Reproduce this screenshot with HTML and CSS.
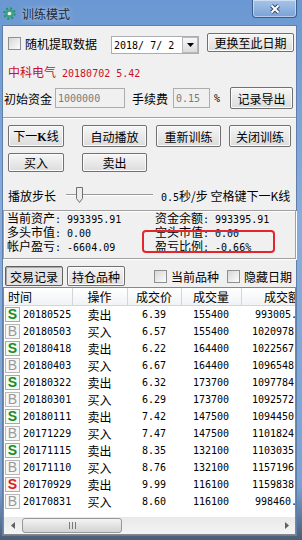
FILE: index.html
```html
<!DOCTYPE html>
<html>
  <head>
    <meta charset="utf-8">
    <title>训练模式</title>
    <link rel="stylesheet" href="styles.css">
  </head>

  <body>
    <div class="window">
      <!-- title bar -->
      <div class="titlebar">
        <svg class="app-icon" width="13" height="13" viewBox="0 0 16 16">
          <circle cx="8" cy="8" r="6.2" fill="none" stroke="#2b8f6c" stroke-width="3" stroke-dasharray="2.43 2.43" />
          <circle cx="8" cy="8" r="5" fill="#36a47d" />
          <circle cx="8" cy="8" r="2.3" fill="#e4f3ec" />
        </svg>
        <span class="title">训练模式</span>
        <div class="close-btn">
          <svg width="14" height="12" viewBox="0 0 14 12">
            <path d="M3.5 2.5 L10.5 9.5 M10.5 2.5 L3.5 9.5" stroke="#34496a" stroke-width="4" />
            <path d="M3.5 2.5 L10.5 9.5 M10.5 2.5 L3.5 9.5" stroke="#fff" stroke-width="2" />
          </svg>
        </div>
      </div>

      <div class="client">
        <div class="row date-row">
          <label class="check"><span class="box"></span>随机提取数据</label>
          <div class="combo">
            <span class="num">2018/ 7/ 2</span>
            <span class="drop">
              <svg width="7" height="4" viewBox="0 0 7 4"><path d="M0 0 H7 L3.5 4 Z" fill="#000" /></svg>
            </span>
          </div>
          <button class="btn change-btn">更换至此日期</button>
        </div>

        <div class="stock">中科电气<span class="num"> 20180702 5.42</span></div>

        <div class="row fund-row">
          <span>初始资金</span>
          <input class="field fund-field" type="text" value="1000000" disabled />
          <span class="fee-label">手续费</span>
          <input class="field fee-field" type="text" value="0.15" disabled />
          <span class="pct num">%</span>
          <button class="btn export-btn">记录导出</button>
        </div>

        <div class="sep"></div>

        <!-- playback controls -->
        <div class="controls">
          <button class="btn btn-next">下一<b class="k">K</b>线</button>
          <button class="btn btn-auto">自动播放</button>
          <button class="btn btn-reset">重新训练</button>
          <button class="btn btn-close">关闭训练</button>
          <button class="btn btn-buy">买入</button>
          <button class="btn btn-sell">卖出</button>
        </div>

        <div class="row speed">
          <span>播放步长</span>
          <div class="slider">
            <svg class="thumb" width="7" height="16" viewBox="0 0 7 16">
              <path d="M0.5 0.5 H6.5 V11.5 L3.5 15.5 L0.5 11.5 Z" fill="#ececec" stroke="#6f6f6f" />
            </svg>
          </div>
          <span class="speed-text"><span class="num">0.5</span>秒/步 空格键下一K线</span>
        </div>

        <!-- account summary -->
        <div class="stats">
          <div>当前资产<span class="num">: 993395.91</span></div>
          <div>资金余额<span class="num">: 993395.91</span></div>
          <div>多头市值<span class="num">: 0.00</span></div>
          <div>空头市值<span class="num">: 0.00</span></div>
          <div>帐户盈亏<span class="num">: -6604.09</span></div>
          <div>盈亏比例<span class="num">: -0.66%</span></div>
          <div class="mark"></div>
        </div>

        <div class="row tabs">
          <button class="btn tab active">交易记录</button>
          <button class="btn tab">持仓品种</button>
          <label class="check cur-check"><span class="box"></span>当前品种</label>
          <label class="check hide-check"><span class="box"></span>隐藏日期</label>
        </div>

        <!-- trade records -->
        <div class="records">
          <div class="table-wrap">
            <table>
              <colgroup>
                <col style="width: 68px" />
                <col style="width: 55px" />
                <col style="width: 54px" />
                <col style="width: 60px" />
                <col style="width: 82px" />
              </colgroup>
              <thead>
                <tr>
                  <th class="col-date">时间</th>
                  <th>操作</th>
                  <th>成交价</th>
                  <th>成交量</th>
                  <th>成交额</th>
                </tr>
              </thead>
              <tbody>
                <tr><td><div class="when"><span class="tag sell">S</span>20180525</div></td><td>卖出</td><td class="num">6.39</td><td class="num">155400</td><td class="num">993005.94</td></tr>
                <tr><td><div class="when"><span class="tag buy">B</span>20180503</div></td><td>买入</td><td class="num">6.57</td><td class="num">155400</td><td class="num">1020978.00</td></tr>
                <tr><td><div class="when"><span class="tag sell">S</span>20180418</div></td><td>卖出</td><td class="num">6.22</td><td class="num">164400</td><td class="num">1022567.10</td></tr>
                <tr><td><div class="when"><span class="tag buy">B</span>20180403</div></td><td>买入</td><td class="num">6.67</td><td class="num">164400</td><td class="num">1096548.00</td></tr>
                <tr><td><div class="when"><span class="tag sell">S</span>20180322</div></td><td>卖出</td><td class="num">6.32</td><td class="num">173700</td><td class="num">1097784.00</td></tr>
                <tr><td><div class="when"><span class="tag buy">B</span>20180301</div></td><td>买入</td><td class="num">6.29</td><td class="num">173700</td><td class="num">1092572.00</td></tr>
                <tr><td><div class="when"><span class="tag sell">S</span>20180111</div></td><td>卖出</td><td class="num">7.42</td><td class="num">147500</td><td class="num">1094450.00</td></tr>
                <tr><td><div class="when"><span class="tag buy">B</span>20171229</div></td><td>买入</td><td class="num">7.47</td><td class="num">147500</td><td class="num">1101824.00</td></tr>
                <tr><td><div class="when"><span class="tag sell">S</span>20171115</div></td><td>卖出</td><td class="num">8.35</td><td class="num">132100</td><td class="num">1103035.00</td></tr>
                <tr><td><div class="when"><span class="tag buy">B</span>20171110</div></td><td>买入</td><td class="num">8.76</td><td class="num">132100</td><td class="num">1157196.00</td></tr>
                <tr><td><div class="when"><span class="tag loss">S</span>20170929</div></td><td>卖出</td><td class="num">9.99</td><td class="num">116100</td><td class="num">1159838.00</td></tr>
                <tr><td><div class="when"><span class="tag buy">B</span>20170831</div></td><td>买入</td><td class="num">8.60</td><td class="num">116100</td><td class="num">998460.00</td></tr>
              </tbody>
            </table>
          </div>

          <div class="hscroll">
            <span class="arrow">
              <svg width="4" height="7" viewBox="0 0 4 7"><path d="M4 0 V7 L0 3.5 Z" fill="#606060" /></svg>
            </span>
            <span class="scroll-thumb">
              <svg width="7" height="7" viewBox="0 0 7 7">
                <path d="M0.5 0 V7 M3.5 0 V7 M6.5 0 V7" stroke="#7a7a7a" />
              </svg>
            </span>
            <span class="arrow arrow-right">
              <svg width="4" height="7" viewBox="0 0 4 7"><path d="M0 0 V7 L4 3.5 Z" fill="#606060" /></svg>
            </span>
          </div>
        </div>
      </div>
    </div>
  </body>
</html>
```

FILE: styles.css
```css
body {
  margin: 0;
  font-family: "Noto Sans CJK SC", sans-serif;
  font-size: 12px;
  color: #000;
  background: #fff;
}

.num {
  font-family: "DejaVu Sans Mono", monospace;
  font-size: 10px;
}

/* window frame */
.window {
  width: 302px;
  height: 540px;
  display: flex;
  flex-direction: column;
  overflow: hidden;
  background: linear-gradient(to bottom, #6b98d2, #88addc 40%, #7aa2d6 90%, #4d5d74);
}

.titlebar {
  height: 26px;
  flex-shrink: 0;
  display: flex;
  align-items: center;
  padding-left: 3px;
}

.title {
  margin-left: 6px;
  color: #1c2838;
  text-shadow: 0 0 5px rgba(255, 255, 255, 0.7);
}

.close-btn {
  margin-left: auto;
  margin-right: 5px;
  align-self: flex-start;
  width: 45px;
  height: 18px;
  box-sizing: border-box;
  border: 1px solid #3a5e8d;
  border-top: none;
  border-radius: 0 0 4px 4px;
  background: linear-gradient(to bottom, #a6c4ea, #7aa2d6);
  box-shadow: inset 0 0 0 1px rgba(255, 255, 255, 0.45);
  display: flex;
  align-items: center;
  justify-content: center;
}

.client {
  flex: 1;
  margin: 0 6px 5px 3px;
  background: #f0f0f0;
  box-shadow: 0 0 0 1px #5f7ea8;
  display: flex;
  flex-direction: column;
}

.row {
  display: flex;
  align-items: center;
}

/* common controls */
.btn {
  font-family: "Noto Sans CJK SC", sans-serif;
  font-size: 12px;
  color: #000;
  padding: 0;
  box-sizing: border-box;
  border: 1px solid #707070;
  border-radius: 2px;
  background: linear-gradient(to bottom, #f6f6f6, #e9e9e9 50%, #dcdcdc);
  box-shadow: inset 0 0 0 1px #fbfbfb;
}

.check {
  display: flex;
  align-items: center;
  height: 13px;
  line-height: 13px;
}

.box {
  width: 13px;
  height: 13px;
  box-sizing: border-box;
  border: 1px solid #8e8f8f;
  background: linear-gradient(135deg, #d6d6d6, #fdfdfd);
  margin-right: 4px;
}

.field {
  font-family: "DejaVu Sans Mono", monospace;
  font-size: 10px;
  color: #7a7a7a;
  height: 20px;
  box-sizing: border-box;
  border: 1px solid #adadad;
  background: #f0f0f0;
  padding: 0 2px;
}

/* first rows */
.date-row {
  margin-top: 7px;
  height: 22px;
  padding-left: 5px;
  align-items: flex-start;
}

.date-row .check {
  margin-top: 4px;
}

.combo {
  margin-left: 14px;
  margin-top: 3px;
  width: 88px;
  height: 18px;
  box-sizing: border-box;
  border: 1px solid #abadb3;
  background: #fff;
  display: flex;
  align-items: center;
  padding-left: 2px;
}

.drop {
  margin-left: auto;
  width: 16px;
  height: 16px;
  box-sizing: border-box;
  border: 1px solid #b8b8b8;
  background: linear-gradient(to bottom, #f7f7f7, #dcdcdc);
  display: flex;
  align-items: center;
  justify-content: center;
}

.change-btn {
  margin-left: 8px;
  width: 87px;
  height: 19px;
}

.stock {
  margin-top: 11px;
  padding-left: 5px;
  height: 12px;
  line-height: 12px;
  color: #c8102e;
}

.fund-row {
  margin-top: 9px;
  height: 22px;
  padding-left: 1px;
}

.fund-field {
  margin-left: 3px;
  width: 70px;
}

.fee-label {
  margin-left: 7px;
}

.fee-field {
  margin-left: 5px;
  width: 37px;
}

.pct {
  margin-left: 4px;
}

.export-btn {
  margin-left: 10px;
  width: 63px;
  height: 22px;
}

.sep {
  margin-top: 8px;
  border-top: 1px solid #a0a0a0;
  border-bottom: 1px solid #fff;
}

/* playback buttons */
.controls {
  margin-top: 6px;
  padding-left: 5px;
  display: grid;
  grid-template-columns: 74px 74px 73px 62px;
  grid-template-rows: 22px 19px;
  row-gap: 6px;
}

.btn-next,
.btn-buy {
  width: 56px;
}

.btn-auto,
.btn-reset,
.btn-sell {
  width: 65px;
}

.btn-close {
  width: 62px;
}

.k {
  font-family: "Liberation Serif", serif;
  font-size: 12px;
}

.speed {
  margin-top: 15px;
  height: 16px;
  padding-left: 5px;
}

.slider {
  margin-left: 10px;
  width: 87px;
  height: 16px;
  display: flex;
  background:
    linear-gradient(#9a9a9a, #9a9a9a) 0 7px / 100% 1px no-repeat,
    linear-gradient(#ffffff, #ffffff) 0 8px / 100% 1px no-repeat;
}

.thumb {
  margin-left: 10px;
}

.speed-text {
  margin-left: 8px;
}

/* account summary */
.stats {
  margin-top: 7px;
  position: relative;
  border: 1px solid #a0a0a0;
  box-shadow: inset 1px 1px 0 #fff, 1px 1px 0 #fff;
  padding: 1px 0 4px 3px;
  display: grid;
  grid-template-columns: 148px 1fr;
  line-height: 12px;
}

.mark {
  position: absolute;
  left: 138px;
  top: 19px;
  width: 133px;
  height: 23px;
  box-sizing: border-box;
  border: 2.5px solid #e3262c;
  border-radius: 4px;
}

.tabs {
  margin-top: 7px;
  height: 20px;
  padding-left: 2px;
}

.tab {
  width: 58px;
  height: 20px;
}

.tab + .tab {
  margin-left: 4px;
}

.tab.active {
  border-color: #606060;
  background: #e4e4e4;
  box-shadow: inset 1px 1px 0 #a8a8a8;
}

.cur-check {
  margin-left: 29px;
}

.hide-check {
  margin-left: 8px;
}

/* record list */
.records {
  margin-top: 1px;
  flex: 1;
  border: 1px solid #828790;
  background: #fff;
  display: flex;
  flex-direction: column;
  overflow: hidden;
}

.table-wrap {
  flex: 1;
  overflow: hidden;
}

table {
  table-layout: fixed;
  border-collapse: collapse;
  width: 319px;
}

th {
  height: 17px;
  padding: 0;
  font-weight: normal;
  line-height: 17px;
  text-align: center;
  background: linear-gradient(to bottom, #ffffff, #f1f2f4);
  border-right: 1px solid #d5d5d5;
  border-bottom: 1px solid #d5d5d5;
}

th.col-date {
  text-align: left;
  padding-left: 4px;
}

td {
  height: 17px;
  padding: 0;
  line-height: 17px;
  text-align: center;
  white-space: nowrap;
  overflow: hidden;
}

.when {
  display: flex;
  align-items: center;
  font-family: "DejaVu Sans Mono", monospace;
  font-size: 10px;
}

.tag {
  width: 15px;
  height: 15px;
  margin: 0 3px 0 1px;
  box-sizing: border-box;
  border: 1px solid #b0b0b0;
  display: flex;
  align-items: center;
  justify-content: center;
  font-family: "Liberation Sans", sans-serif;
  font-size: 14px;
  line-height: 13px;
}

.tag.sell {
  color: #1b8a2a;
  font-weight: bold;
  border-color: #86c08e;
  background: #f2faf2;
}

.tag.buy {
  color: #9a9a9a;
  border-color: #b8b8b8;
  background: #f7f7f7;
}

.tag.loss {
  color: #d41f26;
  font-weight: bold;
  border-color: #e09a9c;
  background: #fdf2f2;
}

.hscroll {
  height: 17px;
  flex-shrink: 0;
  display: flex;
  align-items: center;
  background: linear-gradient(to bottom, #e9e9e9, #f4f4f4);
}

.arrow {
  width: 17px;
  height: 17px;
  display: flex;
  align-items: center;
  justify-content: center;
}

.arrow-right {
  margin-left: auto;
}

.scroll-thumb {
  margin-left: 1px;
  width: 100px;
  height: 15px;
  box-sizing: border-box;
  border: 1px solid #979797;
  border-radius: 3px;
  background: linear-gradient(to bottom, #f4f4f4, #e2e2e2 50%, #d4d4d4);
  display: flex;
  align-items: center;
  justify-content: center;
}
```
